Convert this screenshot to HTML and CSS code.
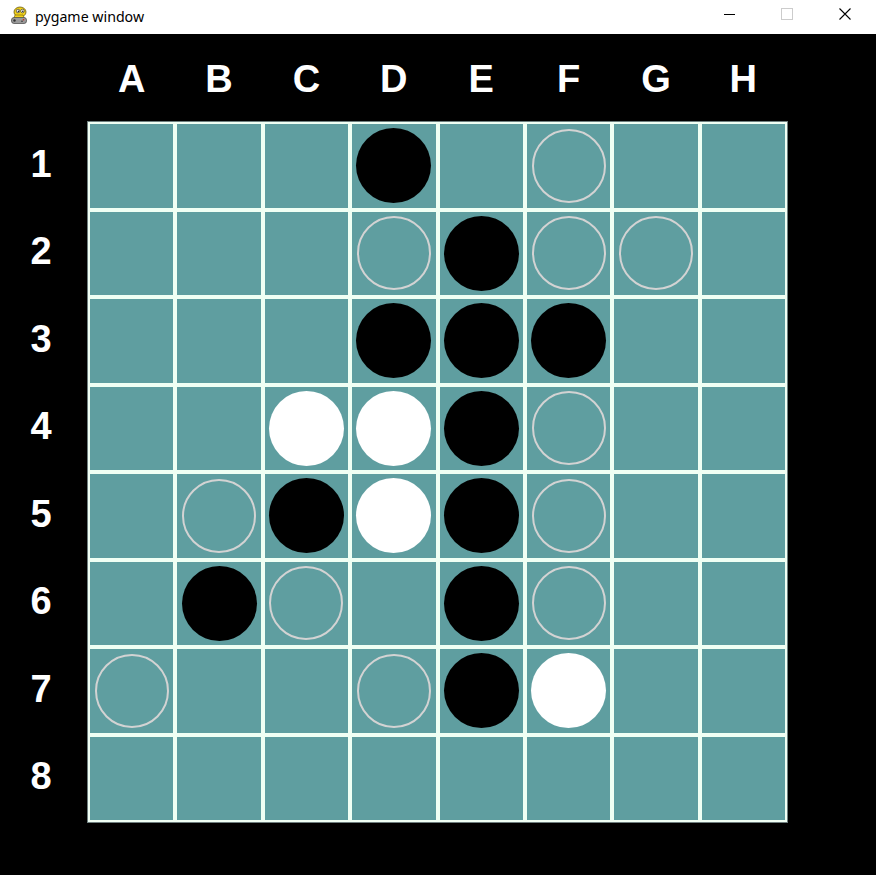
FILE: index.html
```html
<!DOCTYPE html>
<html>
<head>
<meta charset="utf-8">
<title>pygame window</title>
<link rel="stylesheet" href="styles.css">
</head>
<body>
<div class="window">
  <div class="titlebar">
    <svg class="app-icon" width="20" height="20" viewBox="0 0 20 20">
      <ellipse cx="11" cy="6" rx="6" ry="5" fill="#f2d21b" stroke="#6b5a10" stroke-width="0.8"/>
      <circle cx="9" cy="5" r="1.8" fill="#fff" stroke="#222" stroke-width="0.6"/>
      <circle cx="13.5" cy="5" r="1.8" fill="#fff" stroke="#222" stroke-width="0.6"/>
      <circle cx="9.3" cy="5.2" r="0.7" fill="#000"/>
      <circle cx="13.8" cy="5.2" r="0.7" fill="#000"/>
      <path d="M6 9 Q4 12 6 14 L14 14 Q16 11 14 9 Z" fill="#f2d21b" stroke="#6b5a10" stroke-width="0.6"/>
      <rect x="2.5" y="11.5" width="15" height="6" rx="2.5" fill="#9a9a9a" stroke="#444" stroke-width="0.7"/>
      <circle cx="5.5" cy="14.5" r="1.2" fill="#333"/>
      <circle cx="14.5" cy="13.8" r="0.8" fill="#c22"/>
      <circle cx="13" cy="15.3" r="0.8" fill="#333"/>
    </svg>
    <span class="title">pygame window</span>
    <div class="controls">
      <div class="ctl"><span class="min"></span></div>
      <div class="ctl"><span class="max"></span></div>
      <div class="ctl">
        <svg width="12" height="12" viewBox="0 0 12 12"><path d="M0.5 0.5 L11.5 11.5 M11.5 0.5 L0.5 11.5" stroke="#000" stroke-width="1.1"/></svg>
      </div>
    </div>
  </div>
  <div class="content">
    <div class="game">
      <div class="corner"></div>
      <div class="cols">
        <span>A</span><span>B</span><span>C</span><span>D</span><span>E</span><span>F</span><span>G</span><span>H</span>
      </div>
      <div class="rows">
        <span>1</span><span>2</span><span>3</span><span>4</span><span>5</span><span>6</span><span>7</span><span>8</span>
      </div>
      <div class="board">
        <div class="cell"></div><div class="cell"></div><div class="cell"></div><div class="cell"><i class="disc black"></i></div><div class="cell"></div><div class="cell"><i class="hint"></i></div><div class="cell"></div><div class="cell"></div>
        <div class="cell"></div><div class="cell"></div><div class="cell"></div><div class="cell"><i class="hint"></i></div><div class="cell"><i class="disc black"></i></div><div class="cell"><i class="hint"></i></div><div class="cell"><i class="hint"></i></div><div class="cell"></div>
        <div class="cell"></div><div class="cell"></div><div class="cell"></div><div class="cell"><i class="disc black"></i></div><div class="cell"><i class="disc black"></i></div><div class="cell"><i class="disc black"></i></div><div class="cell"></div><div class="cell"></div>
        <div class="cell"></div><div class="cell"></div><div class="cell"><i class="disc white"></i></div><div class="cell"><i class="disc white"></i></div><div class="cell"><i class="disc black"></i></div><div class="cell"><i class="hint"></i></div><div class="cell"></div><div class="cell"></div>
        <div class="cell"></div><div class="cell"><i class="hint"></i></div><div class="cell"><i class="disc black"></i></div><div class="cell"><i class="disc white"></i></div><div class="cell"><i class="disc black"></i></div><div class="cell"><i class="hint"></i></div><div class="cell"></div><div class="cell"></div>
        <div class="cell"></div><div class="cell"><i class="disc black"></i></div><div class="cell"><i class="hint"></i></div><div class="cell"></div><div class="cell"><i class="disc black"></i></div><div class="cell"><i class="hint"></i></div><div class="cell"></div><div class="cell"></div>
        <div class="cell"><i class="hint"></i></div><div class="cell"></div><div class="cell"></div><div class="cell"><i class="hint"></i></div><div class="cell"><i class="disc black"></i></div><div class="cell"><i class="disc white"></i></div><div class="cell"></div><div class="cell"></div>
        <div class="cell"></div><div class="cell"></div><div class="cell"></div><div class="cell"></div><div class="cell"></div><div class="cell"></div><div class="cell"></div><div class="cell"></div>
      </div>
    </div>
  </div>
</div>
</body>
</html>
```

FILE: styles.css
```css
html, body {
  margin: 0;
  padding: 0;
  background: #000;
}
.window {
  width: 876px;
  height: 875px;
  display: flex;
  flex-direction: column;
  overflow: hidden;
}
.titlebar {
  height: 34px;
  flex: none;
  background: #fff;
  display: flex;
  align-items: center;
  padding-left: 9px;
  box-sizing: border-box;
}
.app-icon {
  flex: none;
  margin-top: -2px;
}
.title {
  margin-left: 6px;
  font-family: "Noto Sans", "Open Sans", sans-serif;
  font-size: 14.2px;
  color: #000;
  margin-top: -2px;
}
.controls {
  margin-left: auto;
  margin-right: 2px;
  display: flex;
  height: 100%;
}
.ctl {
  width: 58px;
  height: 100%;
  display: flex;
  align-items: center;
  justify-content: center;
  margin-top: -3px;
}
.min {
  display: block;
  width: 11px;
  height: 1px;
  background: #000;
}
.max {
  display: block;
  width: 10px;
  height: 10px;
  border: 1px solid #cccccc;
}
.content {
  flex: 1;
  background: #000;
}
.game {
  display: grid;
  grid-template-columns: 88px 699px;
  grid-template-rows: 88px 700px;
}
.cols {
  display: grid;
  grid-template-columns: repeat(8, 1fr);
  column-gap: 4px;
  padding: 0 2px;
  align-items: center;
}
.rows {
  display: grid;
  grid-template-rows: repeat(8, 1fr);
  row-gap: 4px;
  padding: 2px 0;
  justify-items: center;
  align-items: center;
  padding-right: 6px;
}
.cols span, .rows span {
  font-family: "Liberation Sans", Arial, sans-serif;
  font-weight: bold;
  font-size: 38px;
  color: #fff;
  text-align: center;
  line-height: 1;
}
.cols span {
  margin-top: 2px;
}
.rows span {
  margin-top: -4px;
}
.board {
  background: #f0fff4;
  padding: 2px;
  display: grid;
  grid-template-columns: repeat(8, 1fr);
  grid-template-rows: repeat(8, 1fr);
  gap: 4px;
  box-shadow: 0 0 0 1px #6f7f7f;
}
.cell {
  background: #5f9ea0;
  display: flex;
  align-items: center;
  justify-content: center;
}
.disc {
  display: block;
  width: 75px;
  height: 75px;
  border-radius: 50%;
}
.disc.black {
  background: #000;
}
.disc.white {
  background: #fff;
}
.hint {
  display: block;
  width: 74px;
  height: 74px;
  border-radius: 50%;
  border: 2px solid #d3d3d3;
  box-sizing: border-box;
}
```
